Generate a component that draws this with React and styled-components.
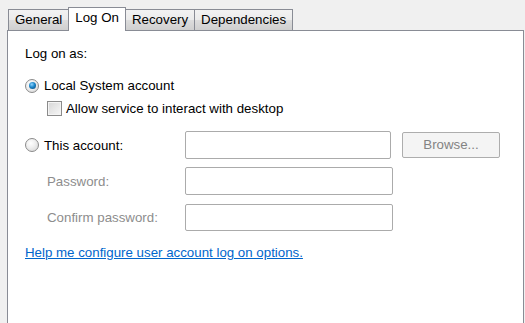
import React from 'react'
import styled, { createGlobalStyle } from 'styled-components'

const GlobalStyle = createGlobalStyle`
    html, body {
        margin: 0;
        padding: 0;
        background: #f0f0f0;
        overflow: hidden;
    }
    body {
        font-family: "Liberation Sans", Arial, sans-serif;
        font-size: 13.3px;
        color: #000;
    }
`

const Window = styled.div`
    width: 525px;
    height: 323px;
    overflow: hidden;
    background: #f0f0f0;
`

const TabStrip = styled.div`
    display: flex;
    align-items: flex-end;
    height: 31px;
    padding-left: 8px;
`

const Tab = styled.div`
    position: relative;
    z-index: ${props => props.active ? 2 : 1};
    box-sizing: border-box;
    height: ${props => props.active ? '24px' : '21px'};
    margin-bottom: ${props => props.active ? '0' : '1px'};
    margin-left: -1px;
    padding: 0 6px;
    border: 1px solid #898c95;
    border-bottom: none;
    background: ${props => props.active
        ? '#ffffff'
        : 'linear-gradient(#f2f2f2, #ebebeb 50%, #dddddd 51%, #cfcfcf)'};
    line-height: ${props => props.active ? '20px' : '19px'};
    white-space: nowrap;

    &:first-child {
        margin-left: 0;
    }
`

const Panel = styled.div`
    position: relative;
    box-sizing: border-box;
    width: 517px;
    height: 293px;
    margin: -1px 0 0 7px;
    padding: 15px 0 0 17px;
    background: #ffffff;
    border: 1px solid #898c95;
    border-bottom: none;
`

const Line = styled.div`
    display: flex;
    align-items: center;
    height: 15px;
    line-height: 15px;
    margin-top: ${props => props.mt || 0}px;
    padding-left: ${props => props.indent || 0}px;
`

const Radio = styled.span`
    position: relative;
    box-sizing: border-box;
    width: 14px;
    height: 14px;
    margin-right: 5px;
    border-radius: 50%;
    border: 1px solid #8b8b8b;
    background: radial-gradient(circle at 40% 35%, #ffffff, #f0f0f0 40%, #d2d2d2 100%);
    flex-shrink: 0;

    &::after {
        content: '';
        display: ${props => props.checked ? 'block' : 'none'};
        position: absolute;
        left: 2.5px;
        top: 2.5px;
        width: 7px;
        height: 7px;
        border-radius: 50%;
        background: radial-gradient(circle at 40% 35%, #8fd3ff, #1b86c9 45%, #0a3f73 100%);
    }
`

const Check = styled.span`
    box-sizing: border-box;
    width: 15px;
    height: 15px;
    margin-right: 4px;
    border: 1px solid #8b8b8b;
    background: linear-gradient(135deg, #d6d6d6, #f7f7f7);
    box-shadow: inset 0 0 0 1px #f4f4f4;
    flex-shrink: 0;
`

const Form = styled.div`
    display: grid;
    grid-template-columns: 160px 208px auto;
    grid-auto-rows: 28px;
    row-gap: 8px;
    align-items: center;
    margin-top: 15px;
`

const Label = styled.div`
    display: flex;
    align-items: center;
    padding-left: ${props => props.indent || 0}px;
    color: ${props => props.disabled ? '#8d8d8d' : '#000'};
`

const Field = styled.div`
    box-sizing: border-box;
    width: ${props => props.w || 208}px;
    height: ${props => props.h || 28}px;
    border: 1px solid #ababab;
    border-radius: 2px;
    background: #fff;
`

const Button = styled.div`
    box-sizing: border-box;
    width: 98px;
    height: 26px;
    margin-left: 9px;
    border: 1px solid #adadad;
    border-radius: 2px;
    background: #f4f4f4;
    color: #838383;
    text-align: center;
    line-height: 24px;
`

const Link = styled.a`
    display: inline-block;
    margin-top: 14px;
    line-height: 15px;
    color: #0066cc;
    text-decoration: underline;
    cursor: pointer;
`

const App = () => {
    return (
        <Window>
            <GlobalStyle />
            <TabStrip>
                <Tab>General</Tab>
                <Tab active>Log On</Tab>
                <Tab>Recovery</Tab>
                <Tab>Dependencies</Tab>
            </TabStrip>
            <Panel>
                <Line>Log on as:</Line>
                <Line mt={17}><Radio checked />Local System account</Line>
                <Line mt={8} indent={22}><Check />Allow service to interact with desktop</Line>
                <Form>
                    <Label><Radio />This account:</Label>
                    <Field w={206} />
                    <Button>Browse...</Button>
                    <Label disabled indent={22}>Password:</Label>
                    <Field />
                    <div />
                    <Label disabled indent={22}>Confirm password:</Label>
                    <Field h={27} />
                    <div />
                </Form>
                <Link>Help me configure user account log on options.</Link>
            </Panel>
        </Window>
    )
}

export default App
